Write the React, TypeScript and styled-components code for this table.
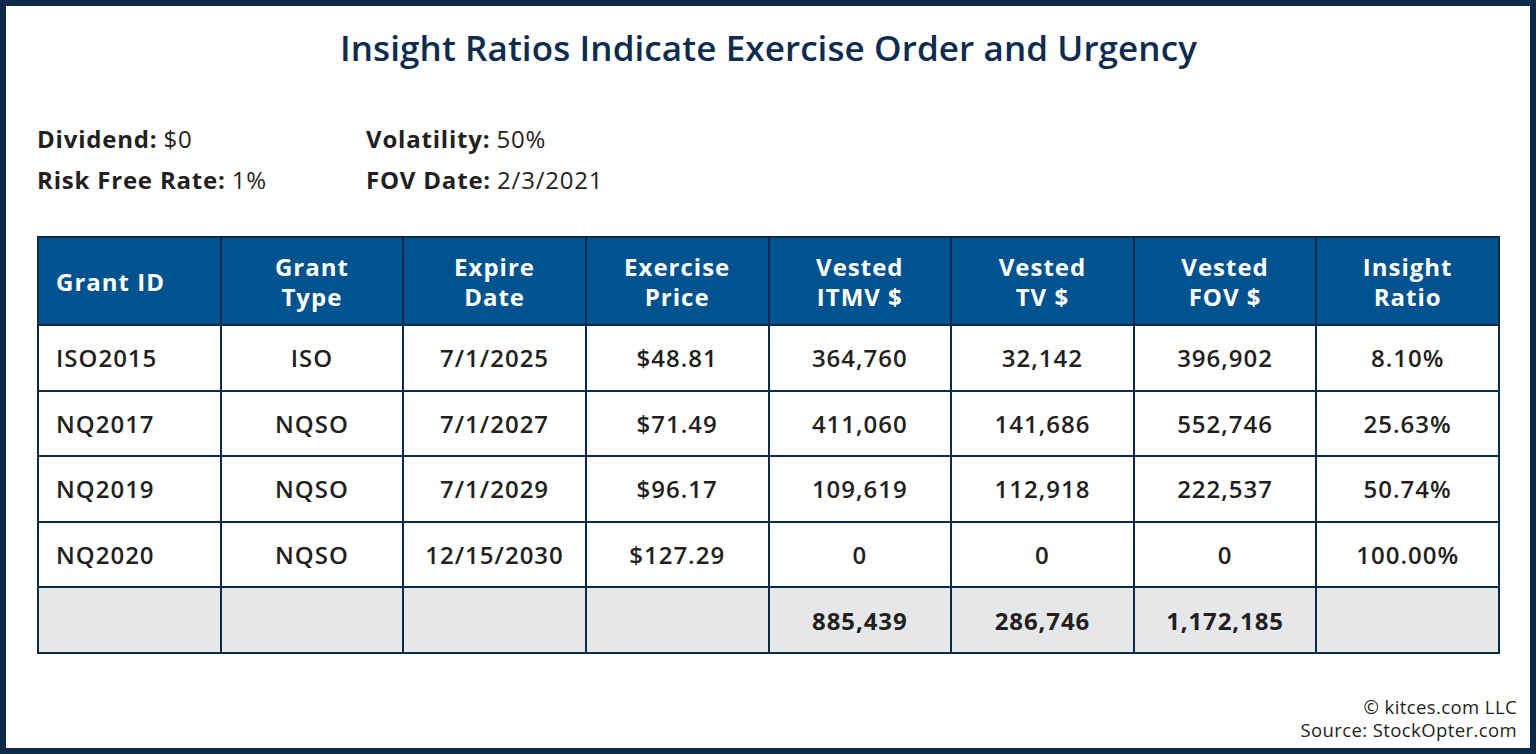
import React from "react";
import styled, { createGlobalStyle } from "styled-components";

const GlobalStyle = createGlobalStyle`
  html, body { margin: 0; padding: 0; background: #ffffff; }
  body { font-family: "Open Sans", "Liberation Sans", sans-serif; }
  * { box-sizing: border-box; }
`;

const Frame = styled.div`
  width: 1536px;
  height: 754px;
  border: 6px solid #0c2a4b;
  background: #ffffff;
  display: flex;
  flex-direction: column;
  padding: 0 30px 0 31px;
  position: relative;
  color: #231f20;
`;

const Title = styled.h1`
  margin: 22px 0 0;
  font-size: 35px;
  line-height: 40px;
  font-weight: 600;
  color: #0e2c4f;
  text-align: center;
  letter-spacing: 0.1px;
`;

const Info = styled.div`
  margin-top: 54px;
  display: grid;
  grid-template-columns: 329px auto;
  row-gap: 7px;
  justify-content: start;
`;

const InfoItem = styled.div`
  font-size: 24px;
  line-height: 34px;
  letter-spacing: 0.8px;
`;

const Label = styled.span`
  font-weight: 700;
  margin-right: 6px;
`;

const Table = styled.table`
  margin-top: 39px;
  width: 1463px;
  border-collapse: collapse;
  table-layout: fixed;
  border: 2px solid #0c2a4b;
`;

const Th = styled.th<{ $left?: boolean }>`
  background: #00538f;
  color: #ffffff;
  height: 88px;
  font-size: 24px;
  line-height: 30px;
  font-weight: 700;
  letter-spacing: 1px;
  border: 2px solid #0c2a4b;
  text-align: ${(p) => (p.$left ? "left" : "center")};
  padding: 1px 0 0;
  padding-left: ${(p) => (p.$left ? "17px" : "0")};
`;

const Td = styled.td<{ $left?: boolean; $total?: boolean }>`
  height: 65.6px;
  font-size: 24px;
  font-weight: ${(p) => (p.$total ? 700 : 600)};
  letter-spacing: ${(p) => (p.$total ? "0.9px" : "1px")};
  color: #231f20;
  background: ${(p) => (p.$total ? "#e6e7e8" : "#ffffff")};
  border: 2px solid #0c2a4b;
  text-align: ${(p) => (p.$left ? "left" : "center")};
  padding: 0;
  padding-left: ${(p) => (p.$left ? "17px" : "0")};
`;

const Footer = styled.div`
  position: absolute;
  right: 13px;
  bottom: 7px;
  text-align: right;
  font-size: 18.5px;
  line-height: 23px;
  color: #231f20;
  letter-spacing: 0.4px;
`;

const headers: string[][] = [
  ["Grant ID"],
  ["Grant", "Type"],
  ["Expire", "Date"],
  ["Exercise", "Price"],
  ["Vested", "ITMV $"],
  ["Vested", "TV $"],
  ["Vested", "FOV $"],
  ["Insight", "Ratio"],
];

const rows: string[][] = [
  ["ISO2015", "ISO", "7/1/2025", "$48.81", "364,760", "32,142", "396,902", "8.10%"],
  ["NQ2017", "NQSO", "7/1/2027", "$71.49", "411,060", "141,686", "552,746", "25.63%"],
  ["NQ2019", "NQSO", "7/1/2029", "$96.17", "109,619", "112,918", "222,537", "50.74%"],
  ["NQ2020", "NQSO", "12/15/2030", "$127.29", "0", "0", "0", "100.00%"],
];

const totals = ["", "", "", "", "885,439", "286,746", "1,172,185", ""];

export default function App() {
  return (
    <>
      <GlobalStyle />
      <Frame>
        <Title>Insight Ratios Indicate Exercise Order and Urgency</Title>
        <Info>
          <InfoItem>
            <Label>Dividend:</Label>$0
          </InfoItem>
          <InfoItem>
            <Label>Volatility:</Label>50%
          </InfoItem>
          <InfoItem>
            <Label>Risk Free Rate:</Label>1%
          </InfoItem>
          <InfoItem>
            <Label>FOV Date:</Label>2/3/2021
          </InfoItem>
        </Info>
        <Table>
          <thead>
            <tr>
              {headers.map((h, i) => (
                <Th key={i} $left={i === 0}>
                  {h.map((line, j) => (
                    <React.Fragment key={j}>
                      {j > 0 && <br />}
                      {line}
                    </React.Fragment>
                  ))}
                </Th>
              ))}
            </tr>
          </thead>
          <tbody>
            {rows.map((r, i) => (
              <tr key={i}>
                {r.map((c, j) => (
                  <Td key={j} $left={j === 0}>
                    {c}
                  </Td>
                ))}
              </tr>
            ))}
            <tr>
              {totals.map((c, j) => (
                <Td key={j} $total>
                  {c}
                </Td>
              ))}
            </tr>
          </tbody>
        </Table>
        <Footer>
          © kitces.com LLC
          <br />
          Source: StockOpter.com
        </Footer>
      </Frame>
    </>
  );
}
